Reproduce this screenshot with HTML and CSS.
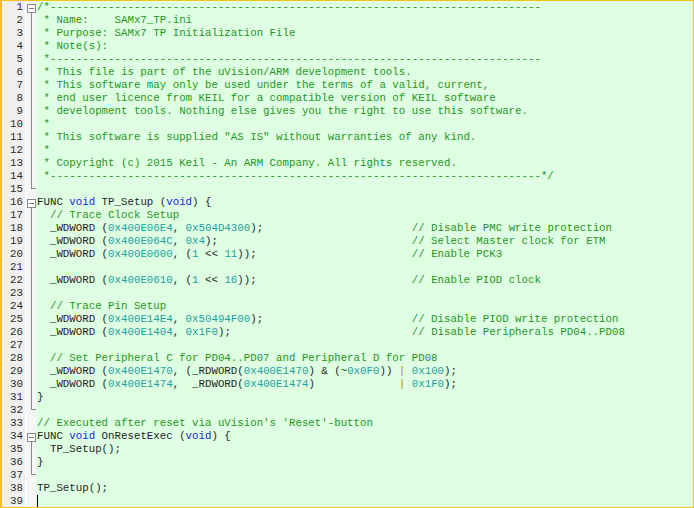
FILE: index.html
```html
<!DOCTYPE html>
<html>
<head>
<meta charset="utf-8">
<link rel="stylesheet" href="styles.css">
</head>
<body>
<div class="editor">
  <div class="gutter">
    <div>1</div><div>2</div><div>3</div><div>4</div><div>5</div><div>6</div><div>7</div><div>8</div><div>9</div><div>10</div>
    <div>11</div><div>12</div><div>13</div><div>14</div><div>15</div><div>16</div><div>17</div><div>18</div><div>19</div><div>20</div>
    <div>21</div><div>22</div><div>23</div><div>24</div><div>25</div><div>26</div><div>27</div><div>28</div><div>29</div><div>30</div>
    <div>31</div><div>32</div><div>33</div><div>34</div><div>35</div><div>36</div><div>37</div><div>38</div><div>39</div>
  </div>
  <div class="fold">
    <div class="f box"></div>
    <div class="f ln"></div><div class="f ln"></div><div class="f ln"></div><div class="f ln"></div><div class="f ln"></div><div class="f ln"></div><div class="f ln"></div><div class="f ln"></div><div class="f ln"></div><div class="f ln"></div><div class="f ln"></div><div class="f ln"></div><div class="f ln"></div>
    <div class="f end"></div>
    <div class="f box"></div>
    <div class="f ln"></div><div class="f ln"></div><div class="f ln"></div><div class="f ln"></div><div class="f ln"></div><div class="f ln"></div><div class="f ln"></div><div class="f ln"></div><div class="f ln"></div><div class="f ln"></div><div class="f ln"></div><div class="f ln"></div><div class="f ln"></div><div class="f ln"></div><div class="f ln"></div>
    <div class="f end"></div>
    <div class="f"></div>
    <div class="f box"></div>
    <div class="f ln"></div><div class="f ln"></div>
    <div class="f end"></div>
    <div class="f"></div>
    <div class="f"></div>
  </div>
  <div class="code">
<div class="l"><span class="c">/*----------------------------------------------------------------------------</span></div>
<div class="l"><span class="c"> * Name:    SAMx7_TP.ini</span></div>
<div class="l"><span class="c"> * Purpose: SAMx7 TP Initialization File</span></div>
<div class="l"><span class="c"> * Note(s):</span></div>
<div class="l"><span class="c"> *----------------------------------------------------------------------------</span></div>
<div class="l"><span class="c"> * This file is part of the uVision/ARM development tools.</span></div>
<div class="l"><span class="c"> * This software may only be used under the terms of a valid, current,</span></div>
<div class="l"><span class="c"> * end user licence from KEIL for a compatible version of KEIL software</span></div>
<div class="l"><span class="c"> * development tools. Nothing else gives you the right to use this software.</span></div>
<div class="l"><span class="c"> *</span></div>
<div class="l"><span class="c"> * This software is supplied "AS IS" without warranties of any kind.</span></div>
<div class="l"><span class="c"> *</span></div>
<div class="l"><span class="c"> * Copyright (c) 2015 Keil - An ARM Company. All rights reserved.</span></div>
<div class="l"><span class="c"> *----------------------------------------------------------------------------*/</span></div>
<div class="l"> </div>
<div class="l">FUNC <span class="k">void</span> TP_Setup (<span class="k">void</span>) {</div>
<div class="l">  <span class="c">// Trace Clock Setup</span></div>
<div class="l">  _WDWORD (<span class="n">0x400E06E4</span>, <span class="n">0x504D4300</span>);                       <span class="c">// Disable PMC write protection</span></div>
<div class="l">  _WDWORD (<span class="n">0x400E064C</span>, <span class="n">0x4</span>);                              <span class="c">// Select Master clock for ETM</span></div>
<div class="l">  _WDWORD (<span class="n">0x400E0600</span>, (<span class="n">1</span> &lt;&lt; <span class="n">11</span>));                        <span class="c">// Enable PCK3</span></div>
<div class="l"> </div>
<div class="l">  _WDWORD (<span class="n">0x400E0610</span>, (<span class="n">1</span> &lt;&lt; <span class="n">16</span>));                        <span class="c">// Enable PIOD clock</span></div>
<div class="l"> </div>
<div class="l">  <span class="c">// Trace Pin Setup</span></div>
<div class="l">  _WDWORD (<span class="n">0x400E14E4</span>, <span class="n">0x50494F00</span>);                       <span class="c">// Disable PIOD write protection</span></div>
<div class="l">  _WDWORD (<span class="n">0x400E1404</span>, <span class="n">0x1F0</span>);                            <span class="c">// Disable Peripherals PD04..PD08</span></div>
<div class="l"> </div>
<div class="l">  <span class="c">// Set Peripheral C for PD04..PD07 and Peripheral D for PD08</span></div>
<div class="l">  _WDWORD (<span class="n">0x400E1470</span>, (_RDWORD(<span class="n">0x400E1470</span>) &amp; (~<span class="n">0x0F0</span>)) <span class="o">|</span> <span class="n">0x100</span>);</div>
<div class="l">  _WDWORD (<span class="n">0x400E1474</span>,  _RDWORD(<span class="n">0x400E1474</span>)             <span class="o">|</span> <span class="n">0x1F0</span>);</div>
<div class="l">}</div>
<div class="l"> </div>
<div class="l"><span class="c">// Executed after reset via uVision's 'Reset'-button</span></div>
<div class="l">FUNC <span class="k">void</span> OnResetExec (<span class="k">void</span>) {</div>
<div class="l">  TP_Setup();</div>
<div class="l">}</div>
<div class="l"> </div>
<div class="l">TP_Setup();</div>
<div class="l"><span class="caret"></span></div>
  </div>
</div>
</body>
</html>
```

FILE: styles.css
```css
html, body {
  margin: 0;
  padding: 0;
  background: #ffffff;
}

.editor {
  box-sizing: border-box;
  width: 694px;
  height: 508px;
  display: flex;
  border-style: solid;
  border-color: #f2c21c;
  border-width: 1px 1px 1px 2px;
  font-family: "Liberation Mono", "Courier New", monospace;
  font-size: 10.77px;
  line-height: 13px;
  overflow: hidden;
}

.gutter {
  width: 23px;
  box-sizing: border-box;
  padding-right: 2px;
  background: #efefef;
  color: #2a2a2a;
  text-align: right;
}

.gutter div {
  height: 13px;
}

.fold {
  width: 11px;
  background: #f6f6f6;
  border-left: 1px solid #ffffff;
  box-sizing: border-box;
}

.f {
  height: 13px;
  position: relative;
}

.f.box::before {
  content: "";
  position: absolute;
  left: 1px;
  top: 3px;
  width: 7px;
  height: 7px;
  border: 1px solid #8a8a8a;
  background: #ffffff;
}

.f.box::after {
  content: "";
  position: absolute;
  left: 3px;
  top: 7px;
  width: 5px;
  height: 1px;
  background: #7a7a7a;
}

.f.box {
  background: linear-gradient(#8a8a8a, #8a8a8a) no-repeat 5px 12px / 1px 1px;
}

.f.ln::before {
  content: "";
  position: absolute;
  left: 5px;
  top: 0;
  width: 1px;
  height: 13px;
  background: #8a8a8a;
}

.f.end::before {
  content: "";
  position: absolute;
  left: 5px;
  top: 0;
  width: 1px;
  height: 6px;
  background: #8a8a8a;
}

.f.end::after {
  content: "";
  position: absolute;
  left: 5px;
  top: 5px;
  width: 5px;
  height: 1px;
  background: #8a8a8a;
}

.code {
  flex: 1;
  background: #dfffe2;
  color: #1e1e1e;
  padding-left: 1px;
}

.l {
  height: 13px;
  white-space: pre;
}

.c {
  color: #1f951f;
}

.k {
  color: #1c1ce0;
}

.n {
  color: #22a0a0;
}

.o {
  color: #9a8420;
}

.caret {
  display: inline-block;
  width: 1px;
  height: 13px;
  background: #000000;
  vertical-align: top;
}
```
